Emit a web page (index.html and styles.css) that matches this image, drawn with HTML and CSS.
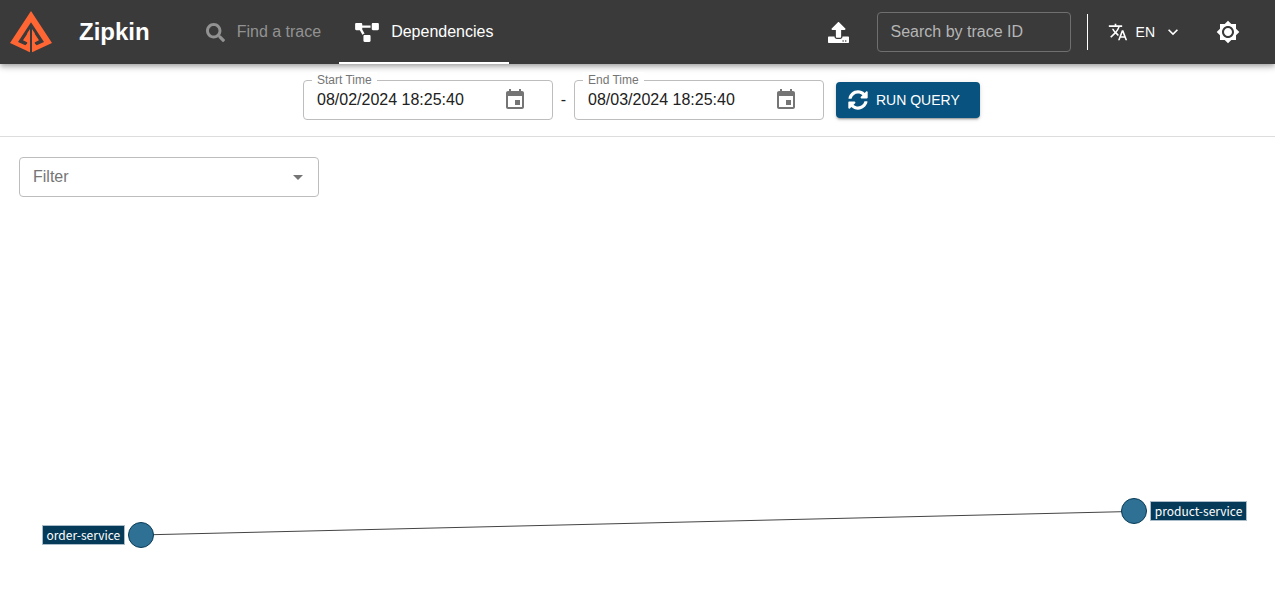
FILE: index.html
```html
<!DOCTYPE html>
<html lang="en">
<head>
    <meta charset="UTF-8">
    <meta name="viewport" content="width=device-width, initial-scale=1.0">
    <title>Zipkin</title>
    <link rel="stylesheet" href="styles.css">
</head>
<body>
    <header class="app-bar">
        <a class="logo" href="#" aria-label="Home">
            <svg width="42" height="42" viewBox="0 0 126 126">
                <path fill="#ff6633" d="M63 0 126 96 66 124V54H60V124L0 96Z"/>
                <path fill="#3a3a3a" d="M63 34 24 93 46 103 54 95 39 88 55 64V124H71V64L87 88 72 95 80 103 102 93Z"/>
                <path fill="#ff6633" d="M60 54V124L52 120V66ZM66 54V124L74 120V66Z"/>
            </svg>
        </a>
        <h1 class="brand">Zipkin</h1>
        <nav class="tabs">
            <a class="tab" href="#">
                <svg width="19" height="19" viewBox="0 0 512 512" fill="currentColor"><path d="M505 442.700 405.300 343c-4.500-4.500-10.600-7-17-7H372c27.600-35.300 44-79.700 44-128C416 93.100 322.900 0 208 0S0 93.100 0 208s93.100 208 208 208c48.300 0 92.700-16.400 128-44v16.300c0 6.400 2.500 12.500 7 17l99.700 99.700c9.400 9.400 24.600 9.400 33.900 0l28.300-28.300c9.400-9.400 9.400-24.600.1-34zM208 336c-70.700 0-128-57.200-128-128 0-70.700 57.200-128 128-128 70.700 0 128 57.200 128 128 0 70.700-57.200 128-128 128z"/></svg>
                Find a trace
            </a>
            <a class="tab tab-active" href="#">
                <svg width="24" height="19" viewBox="0 0 640 512" fill="currentColor"><path d="M384 320H256c-17.700 0-32 14.300-32 32v128c0 17.700 14.300 32 32 32h128c17.700 0 32-14.300 32-32V352c0-17.700-14.300-32-32-32zM192 32c0-17.700-14.300-32-32-32H32C14.300 0 0 14.300 0 32v128c0 17.700 14.300 32 32 32h95.700l73.200 128C212 301 232.400 288 256 288h.3L192 175.500V128h224V64H192V32zM608 0H480c-17.700 0-32 14.300-32 32v128c0 17.700 14.300 32 32 32h128c17.700 0 32-14.300 32-32V32c0-17.700-14.300-32-32-32z"/></svg>
                Dependencies
            </a>
        </nav>
        <button class="icon-button upload" type="button" aria-label="Upload JSON">
            <svg width="21" height="21" viewBox="0 0 512 512" fill="currentColor"><path d="M296 384h-80c-13.300 0-24-10.700-24-24V192h-87.700c-17.800 0-26.700-21.500-14.100-34.100L242.300 5.700c7.500-7.500 19.800-7.500 27.300 0l152.200 152.200c12.600 12.600 3.700 34.100-14.100 34.100H320v168c0 13.300-10.700 24-24 24zm216-8v112c0 13.300-10.700 24-24 24H24c-13.300 0-24-10.700-24-24V376c0-13.300 10.700-24 24-24h136v8c0 30.900 25.100 56 56 56h80c30.900 0 56-25.100 56-56v-8h136c13.300 0 24 10.700 24 24zm-124 88c0-11-9-20-20-20s-20 9-20 20 9 20 20 20 20-9 20-20zm64 0c0-11-9-20-20-20s-20 9-20 20 9 20 20 20 20-9 20-20z"/></svg>
        </button>
        <input class="trace-search" type="text" placeholder="Search by trace ID" aria-label="Search by trace ID">
        <div class="divider"></div>
        <button class="language" type="button">
            <svg width="20" height="20" viewBox="0 0 24 24" fill="currentColor"><path d="m12.870 15.070-2.540-2.510.03-.03c1.740-1.940 2.980-4.170 3.710-6.530H17V4h-7V2H8v2H1v1.990h11.170C11.500 7.920 10.440 9.750 9 11.350 8.070 10.320 7.300 9.190 6.690 8h-2c.73 1.630 1.730 3.170 2.980 4.560l-5.090 5.020L4 19l5-5 3.110 3.110.76-2.040zM18.500 10h-2L12 22h2l1.120-3h4.750L21 22h2l-4.500-12zm-2.620 7 1.620-4.330L19.120 17h-3.240z"/></svg>
            EN
            <svg width="20" height="20" viewBox="0 0 24 24" fill="currentColor"><path d="M16.590 8.590 12 13.170 7.410 8.590 6 10l6 6 6-6z"/></svg>
        </button>
        <button class="icon-button" type="button" aria-label="Toggle theme">
            <svg width="24" height="24" viewBox="0 0 24 24" fill="currentColor"><path d="M20 8.690V4h-4.690L12 .69 8.690 4H4v4.690L.69 12 4 15.310V20h4.690L12 23.310 15.310 20H20v-4.690L23.310 12 20 8.690zM12 18c-3.310 0-6-2.690-6-6s2.690-6 6-6 6 2.690 6 6-2.690 6-6 6zm0-10c-2.210 0-4 1.790-4 4s1.790 4 4 4 4-1.790 4-4-1.790-4-4-4z"/></svg>
        </button>
    </header>

    <form class="query-bar">
        <div class="date-field">
            <label for="startTime">Start Time</label>
            <input id="startTime" type="text" value="08/02/2024 18:25:40">
            <button type="button" aria-label="Choose start date">
                <svg width="24" height="24" viewBox="0 0 24 24" fill="currentColor"><path d="M17 12h-5v5h5v-5zM16 1v2H8V1H6v2H5c-1.110 0-1.990.9-1.990 2L3 19c0 1.100.89 2 2 2h14c1.100 0 2-.9 2-2V5c0-1.100-.9-2-2-2h-1V1h-2zm3 18H5V8h14v11z"/></svg>
            </button>
        </div>
        <span class="dash">-</span>
        <div class="date-field">
            <label for="endTime">End Time</label>
            <input id="endTime" type="text" value="08/03/2024 18:25:40">
            <button type="button" aria-label="Choose end date">
                <svg width="24" height="24" viewBox="0 0 24 24" fill="currentColor"><path d="M17 12h-5v5h5v-5zM16 1v2H8V1H6v2H5c-1.110 0-1.990.9-1.990 2L3 19c0 1.100.89 2 2 2h14c1.100 0 2-.9 2-2V5c0-1.100-.9-2-2-2h-1V1h-2zm3 18H5V8h14v11z"/></svg>
            </button>
        </div>
        <button class="run-query" type="button">
            <svg width="20" height="20" viewBox="0 0 512 512" fill="currentColor"><path d="M370.700 133.300C339.500 104 298.900 88 255.800 88c-77.500.1-144.300 53.200-162.800 126.900-1.300 5.400-6.100 9.100-11.700 9.100H24.100c-7.500 0-13.200-6.800-11.800-14.200C33.900 94.900 134.800 8 256 8c66.400 0 126.800 26.100 171.300 68.700L463 41c15.100-15.100 41-4.400 41 17v134c0 13.300-10.700 24-24 24H346c-21.400 0-32.100-25.900-17-41l41.700-41.700zM32 296h134c21.400 0 32.100 25.900 17 41l-41.800 41.800c31.300 29.300 71.800 45.300 114.900 45.200 77.400-.1 144.300-53.100 162.800-126.800 1.300-5.400 6.100-9.100 11.700-9.100h57.300c7.500 0 13.200 6.800 11.800 14.200C478.100 417.100 377.200 504 256 504c-66.400 0-126.800-26.100-171.300-68.700L49 471c-15.100 15.100-41 4.400-41-17V320c0-13.300 10.700-24 24-24z"/></svg>
            RUN QUERY
        </button>
    </form>

    <main class="content">
        <div class="filter">
            <select aria-label="Filter">
                <option>Filter</option>
            </select>
            <svg class="filter-arrow" width="24" height="24" viewBox="0 0 24 24" fill="currentColor"><path d="m7 10 5 5 5-5z"/></svg>
        </div>
        <!-- dependency graph -->
        <div class="graph">
            <svg class="edges" width="100%" height="100%">
                <line x1="11%" y1="86%" x2="89%" y2="80%" stroke="#444" stroke-width="1"/>
            </svg>
            <div class="node node-order">
                <span class="circle"></span>
                <span class="node-label">order-service</span>
            </div>
            <div class="node node-product">
                <span class="circle"></span>
                <span class="node-label">product-service</span>
            </div>
        </div>
    </main>
</body>
</html>
```
FILE: styles.css
```css
* {
    box-sizing: border-box;
}

body {
    margin: 0;
    min-height: 100vh;
    display: flex;
    flex-direction: column;
    background: #fff;
    color: #212121;
    font-family: "Liberation Sans", Helvetica, Arial, sans-serif;
    font-size: 16px;
    line-height: 24px;
}

button,
input,
select {
    font: inherit;
    color: inherit;
}

button {
    display: flex;
    align-items: center;
    padding: 0;
    border: none;
    background: none;
    cursor: pointer;
}

svg {
    display: block;
    flex-shrink: 0;
}

/* header */
.app-bar {
    position: relative;
    display: flex;
    align-items: center;
    height: 64px;
    padding: 0 35px 0 10px;
    background: #3a3a3a;
    color: #fff;
    box-shadow: 0 2px 4px -1px rgba(0,0,0,0.2), 0 4px 5px rgba(0,0,0,0.14), 0 1px 10px rgba(0,0,0,0.12);
}

.brand {
    margin: 0 40px 0 27px;
    font-size: 24px;
    line-height: 32px;
    font-weight: bold;
}

.tabs {
    display: flex;
    gap: 2px;
    align-self: stretch;
    margin-right: auto;
}

.tab {
    display: flex;
    align-items: center;
    gap: 12px;
    padding: 0 16px;
    color: #929292;
    text-decoration: none;
}

.tab-active {
    color: #fff;
    box-shadow: inset 0 -2px #fff;
}

.upload {
    margin-right: 28px;
}

.trace-search {
    width: 194px;
    height: 40px;
    padding: 0 13px;
    border: 1px solid #6f6f6f;
    border-radius: 4px;
    background: transparent;
}

.trace-search::placeholder {
    color: #b5b5b5;
    opacity: 1;
}

.divider {
    width: 1px;
    height: 36px;
    margin: 0 20px 0 16px;
    background: #fff;
}

.language {
    gap: 8px;
    margin-right: 33px;
    font-size: 14px;
}

/* query bar */
.query-bar {
    display: flex;
    align-items: center;
    justify-content: center;
    height: 73px;
    padding-left: 8px;
    border-bottom: 1px solid #ddd;
}

.date-field {
    position: relative;
    display: flex;
    align-items: center;
    width: 250px;
    height: 40px;
    border: 1px solid #bdbdbd;
    border-radius: 4px;
}

.date-field label {
    position: absolute;
    top: -9px;
    left: 8px;
    padding: 0 5px;
    background: #fff;
    color: #757575;
    font-size: 12px;
    line-height: 16px;
}

.date-field input {
    width: 199px;
    padding: 0 0 0 13px;
    border: none;
    background: none;
}

.date-field button {
    color: #757575;
}

.dash {
    width: 21px;
    text-align: center;
}

.run-query {
    gap: 8px;
    width: 144px;
    height: 36px;
    margin-left: 12px;
    padding: 0 12px;
    border-radius: 4px;
    background: #07527e;
    color: #fff;
    font-size: 14px;
    white-space: nowrap;
    box-shadow: 0 3px 1px -2px rgba(0,0,0,0.2), 0 2px 2px rgba(0,0,0,0.14), 0 1px 5px rgba(0,0,0,0.12);
}

/* content */
.content {
    flex: 1;
    display: flex;
    flex-direction: column;
    padding-top: 20px;
}

.filter {
    position: relative;
    width: 300px;
    margin-left: 19px;
}

.filter select {
    width: 100%;
    height: 40px;
    padding: 0 13px;
    border: 1px solid #bdbdbd;
    border-radius: 4px;
    background: #fff;
    color: #757575;
    appearance: none;
}

.filter-arrow {
    position: absolute;
    top: 8px;
    right: 9px;
    color: #757575;
    pointer-events: none;
}

.graph {
    position: relative;
    flex: 1;
    min-height: 240px;
}

.edges {
    position: absolute;
    inset: 0;
}

.node {
    position: absolute;
    display: flex;
    align-items: center;
    gap: 3px;
    height: 26px;
    margin-top: -13px;
}

.node-order {
    top: 86%;
    right: calc(89% - 14px);
    flex-direction: row-reverse;
}

.node-product {
    top: 80%;
    left: calc(89% - 14px);
}

.circle {
    width: 26px;
    height: 26px;
    border: 1px solid #073b58;
    border-radius: 50%;
    background: #2f7195;
}

.node-label {
    padding: 0 4px;
    border: 1px solid #a9bcc8;
    background: #053b58;
    color: #fff;
    font-family: "Noto Sans CJK KR", sans-serif;
    font-size: 12px;
    line-height: 18px;
}
```
